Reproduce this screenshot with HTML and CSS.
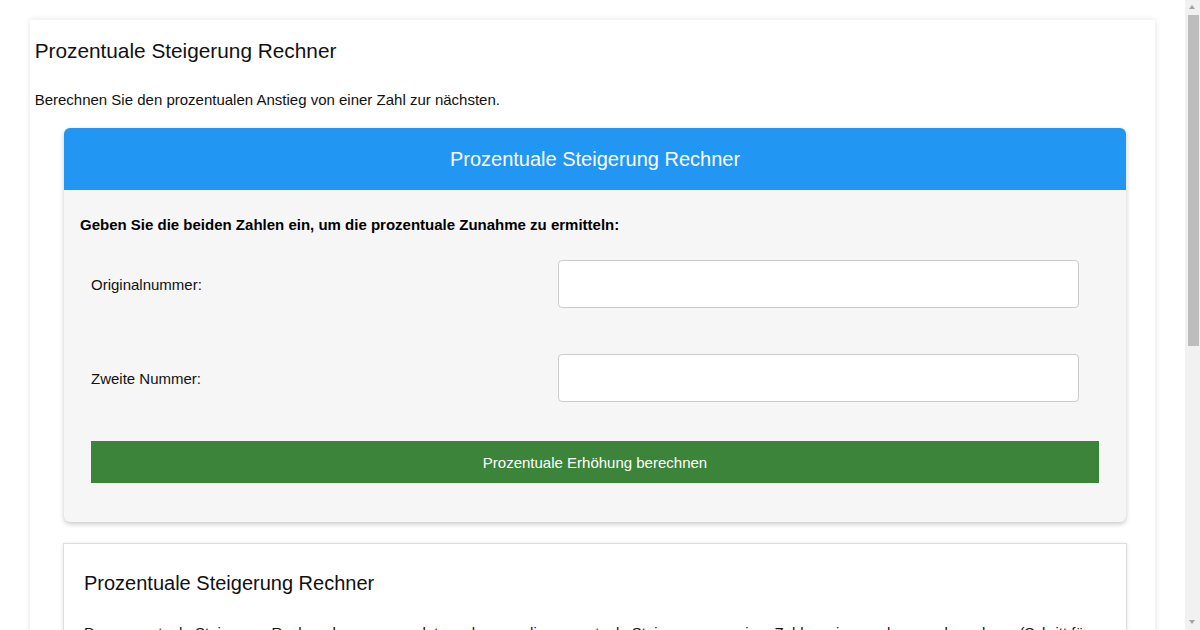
FILE: index.html
```html
<!DOCTYPE html>
<html lang="de">
<head>
<meta charset="utf-8">
<title>Prozentuale Steigerung Rechner</title>
<link rel="stylesheet" href="styles.css">
</head>
<body>
<div class="page">
  <h1 class="page-title">Prozentuale Steigerung Rechner</h1>
  <p class="page-intro">Berechnen Sie den prozentualen Anstieg von einer Zahl zur nächsten.</p>

  <div class="calc">
    <div class="calc-head">Prozentuale Steigerung Rechner</div>
    <div class="calc-body">
      <p class="calc-lead">Geben Sie die beiden Zahlen ein, um die prozentuale Zunahme zu ermitteln:</p>
      <div class="calc-form">
        <div class="calc-row">
          <label class="calc-label" for="n1">Originalnummer:</label>
          <input class="calc-input" id="n1" type="text">
        </div>
        <div class="calc-row">
          <label class="calc-label" for="n2">Zweite Nummer:</label>
          <input class="calc-input" id="n2" type="text">
        </div>
        <button class="calc-btn" type="button">Prozentuale Erhöhung berechnen</button>
      </div>
    </div>
  </div>

  <div class="info">
    <h2 class="info-title">Prozentuale Steigerung Rechner</h2>
    <p class="info-text">Der prozentuale Steigerung Rechner kann verwendet werden, um die prozentuale Steigerung von einer Zahl zu einer anderen zu berechnen (Schritt für Schritt). Geben Sie einfach die ursprüngliche Zahl und die neue Zahl ein und klicken Sie auf die Schaltfläche, um das Ergebnis zu erhalten.</p>
    <p class="info-text">Die prozentuale Steigerung wird berechnet, indem die Differenz zwischen der neuen und der ursprünglichen Zahl durch die ursprüngliche Zahl geteilt und mit 100 multipliziert wird.</p>
  </div>
</div>

<div class="scrollbar" aria-hidden="true">
  <span class="scroll-arrow scroll-up"></span>
  <span class="scroll-thumb"></span>
  <span class="scroll-arrow scroll-down"></span>
</div>
</body>
</html>
```

FILE: styles.css
```css
html, body {
  margin: 0;
  padding: 0;
  background: #fff;
}

body {
  width: 1185px;
  font-family: "Liberation Sans", Arial, sans-serif;
  color: #000;
  font-size: 15px;
}

.page {
  width: 95%;
  margin: 20px auto 20px;
  padding: 19px 0 20px 5px;
  box-sizing: border-box;
  background: #fff;
  box-shadow: 0 0 6px rgba(0, 0, 0, 0.12);
}

.page-title {
  margin: 0;
  font-size: 20.8px;
  font-weight: normal;
  color: #111;
  line-height: 24px;
}

.page-intro {
  margin: 28px 0 20px;
  font-size: 15px;
  line-height: 17px;
  color: #111;
}

.calc {
  width: 1062px;
  margin: 0 auto;
  border-radius: 6px;
  overflow: hidden;
  background: #f6f6f6;
  box-shadow: 0 2px 5px rgba(0, 0, 0, 0.22);
}

.calc-head {
  background: #2196f3;
  color: #fff;
  text-align: center;
  font-size: 20px;
  line-height: 22px;
  padding: 20px 0;
}

.calc-body {
  padding: 26px 16px 39px;
}

.calc-lead {
  margin: 0 0 27px;
  font-weight: bold;
  font-size: 15px;
  line-height: 17px;
}

.calc-form {
  padding: 0 11px;
  display: flex;
  flex-direction: column;
}

.calc-row {
  display: grid;
  grid-template-columns: 467px 521px;
  align-items: center;
  margin-bottom: 46px;
}

.calc-row + .calc-row {
  margin-bottom: 39px;
}

.calc-label {
  font-size: 15px;
  color: #111;
}

.calc-input {
  box-sizing: border-box;
  width: 521px;
  height: 48px;
  border: 1px solid #ccc;
  border-radius: 4px;
  background: #fff;
  font: inherit;
  padding: 0 10px;
}

.calc-btn {
  height: 42px;
  width: 100%;
  border: none;
  background: #3b843a;
  color: #fff;
  font-family: "Liberation Sans", Arial, sans-serif;
  font-size: 15px;
  cursor: pointer;
}

.info {
  width: 1064px;
  box-sizing: border-box;
  margin: 21px auto 0;
  background: #fff;
  border: 1px solid #ddd;
  box-shadow: 0 1px 4px rgba(0, 0, 0, 0.12);
  padding: 28px 20px 20px;
}

.info-title {
  margin: 0 0 27px;
  font-size: 20px;
  font-weight: normal;
  line-height: 23px;
  color: #111;
}

.info-text {
  margin: 0 0 15px;
  font-size: 15px;
  line-height: 22px;
  color: #111;
}

/* emulated classic browser scrollbar */
.scrollbar {
  position: fixed;
  top: 0;
  right: 0;
  width: 15px;
  height: 100vh;
  background: #f1f1f1;
  display: flex;
  flex-direction: column;
  align-items: center;
}

.scroll-arrow {
  display: block;
  flex: 0 0 15px;
  width: 15px;
  position: relative;
}

.scroll-up::after,
.scroll-down::after {
  content: "";
  position: absolute;
  left: 4px;
  width: 0;
  height: 0;
  border-left: 3.5px solid transparent;
  border-right: 3.5px solid transparent;
}

.scroll-up::after {
  top: 5px;
  border-bottom: 4px solid #a3a3a3;
}

.scroll-down::after {
  bottom: 6px;
  border-top: 4px solid #a3a3a3;
}

.scroll-thumb {
  display: block;
  width: 11px;
  height: 331px;
  margin-left: 1px;
  background: #bdbdbd;
}

.scroll-down {
  margin-top: auto;
}
```
